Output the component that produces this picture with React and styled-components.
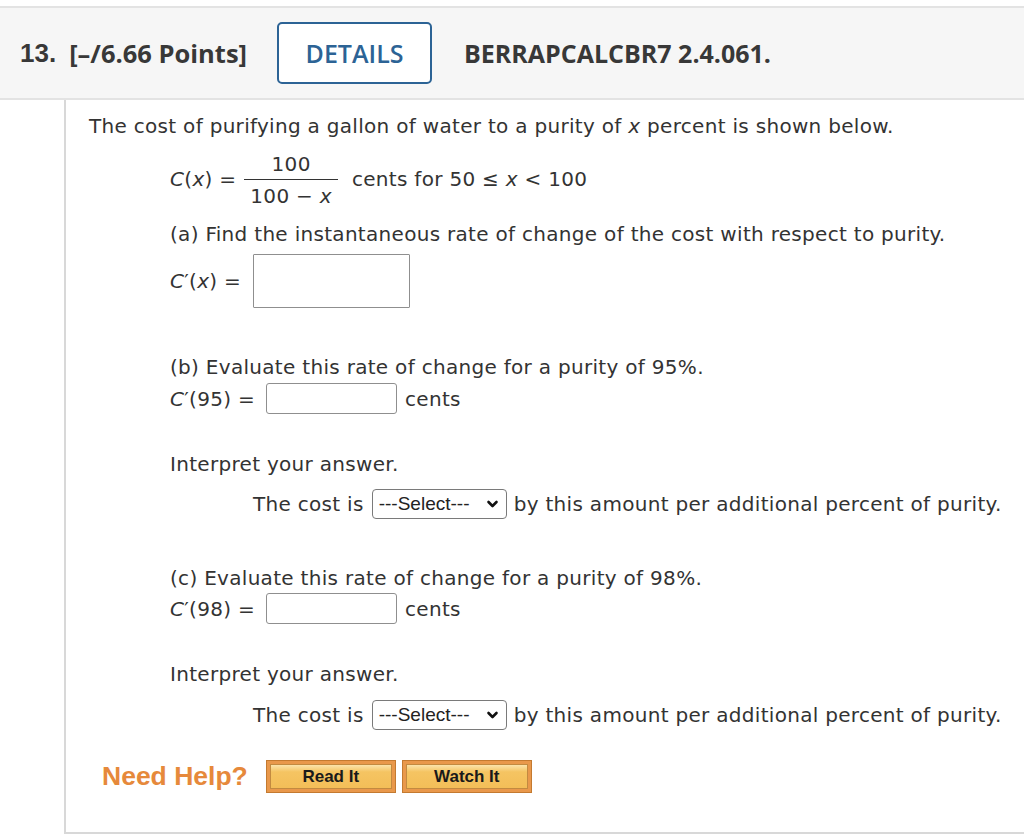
import React from "react";
import styled, { createGlobalStyle } from "styled-components";

const Global = createGlobalStyle`
  html, body { margin: 0; padding: 0; background: #fff; }
  body { font-family: "DejaVu Sans", Verdana, sans-serif; color: #333; }
`;

const Header = styled.div`
  margin-top: 6px;
  height: 94px;
  box-sizing: border-box;
  background: #f6f6f6;
  border-top: 2px solid #e3e3e3;
  border-bottom: 2px solid #e3e3e3;
  display: flex;
  align-items: center;
  padding-left: 20px;
  font-family: "Open Sans", sans-serif;
  font-weight: 700;
  color: #383838;
`;

const Num = styled.span`
  font-family: "Liberation Sans", Arial, sans-serif;
  font-size: 26px;
  font-weight: 700;
  margin-right: 13px;
`;

const Points = styled.span`
  font-size: 25.5px;
  margin-right: 30px;
`;

const DetailsBtn = styled.div`
  width: 155px;
  height: 62px;
  box-sizing: border-box;
  border: 2px solid #2c6395;
  border-radius: 5px;
  display: flex;
  align-items: center;
  justify-content: center;
  color: #2c6395;
  font-size: 25px;
  font-weight: 600;
  margin-right: 32px;
  background: #fff;
`;

const Code = styled.span`
  font-size: 25px;
`;

const Body = styled.div`
  margin-left: 64px;
  border-left: 2px solid #d8d8d8;
  border-bottom: 2px solid #d8d8d8;
  padding: 14px 0 39px 23px;
  font-size: 20px;
  letter-spacing: 0.3px;
`;

const P = styled.div`
  line-height: 24px;
  margin-top: ${(p) => p.mt || 0}px;
  padding-left: ${(p) => p.indent || 0}px;
  display: flex;
  align-items: center;
  white-space: nowrap;
`;

const I = styled.i`
  font-style: italic;
`;

const Frac = styled.span`
  display: inline-flex;
  flex-direction: column;
  align-items: stretch;
  text-align: center;
  margin: 0 14px 0 8px;
`;

const FracTop = styled.span`
  line-height: 28px;
  padding: 2px 4px 1px;
`;

const FracBottom = styled.span`
  line-height: 28px;
  border-top: 1.5px solid #333;
  padding: 2px 6px 0;
`;

const Input = styled.div`
  width: ${(p) => p.w}px;
  height: ${(p) => p.h}px;
  box-sizing: border-box;
  border: 1px solid #8f8f8f;
  border-radius: ${(p) => p.r ?? 3}px;
  background: #fff;
  margin: 0 8px 0 ${(p) => p.ml || 8}px;
`;

const Select = styled.div`
  width: 135px;
  height: 30px;
  box-sizing: border-box;
  border: 1px solid #7a7a7a;
  border-radius: 4px;
  display: flex;
  align-items: center;
  justify-content: space-between;
  padding: 0 7px 0 6px;
  margin: 0 7px 0 8px;
  font-family: "Liberation Sans", Arial, sans-serif;
  font-size: 19px;
  letter-spacing: 0;
  color: #222;
`;

const Help = styled.div`
  display: flex;
  align-items: center;
  padding-left: 13px;
  margin-top: 30px;
`;

const HelpText = styled.span`
  font-family: "Liberation Sans", Arial, sans-serif;
  font-weight: 700;
  font-size: 26.5px;
  letter-spacing: 0;
  color: #e6893b;
  margin-right: 18px;
`;

const OrangeBtn = styled.div`
  width: 130px;
  height: 33px;
  box-sizing: border-box;
  border: 1px solid #c47a30;
  background: #e9984b;
  padding: 3px;
  margin-right: 6px;
  display: flex;
`;

const OrangeInner = styled.div`
  flex: 1;
  background: linear-gradient(#fbe3ab 0, #f5c462 30%, #f3be58 100%);
  border: 1px solid #c38a40;
  display: flex;
  align-items: center;
  justify-content: center;
  font-family: "Liberation Sans", Arial, sans-serif;
  font-weight: 700;
  font-size: 17px;
  letter-spacing: 0;
  color: #1a1a1a;
`;

const Chevron = () => (
  <svg width="13" height="12" viewBox="0 0 13 12">
    <path d="M2.5 4 L6.5 8 L10.5 4" fill="none" stroke="#111" strokeWidth="2.6" strokeLinecap="round" strokeLinejoin="round" />
  </svg>
);

const Interpret = ({ mt, selMt }) => (
  <>
    <P indent={81} mt={mt}>Interpret your answer.</P>
    <P indent={164} mt={selMt}>
      The cost is
      <Select>
        <span>---Select---</span>
        <Chevron />
      </Select>
      by this amount per additional percent of purity.
    </P>
  </>
);

export default function App() {
  return (
    <>
      <Global />
      <Header>
        <Num>13.</Num>
        <Points>[–/6.66 Points]</Points>
        <DetailsBtn>DETAILS</DetailsBtn>
        <Code>BERRAPCALCBR7 2.4.061.</Code>
      </Header>
      <Body>
        <P>
          The cost of purifying a gallon of water to a purity of&nbsp;<I>x</I>&nbsp;percent is shown below.
        </P>
        <P indent={81} mt={10}>
          <I>C</I>(<I>x</I>)&nbsp;=
          <Frac>
            <FracTop>100</FracTop>
            <FracBottom>
              100 − <I>x</I>
            </FracBottom>
          </Frac>
          cents for 50 ≤&nbsp;<I>x</I>&nbsp;&lt; 100
        </P>
        <P indent={81} mt={12}>
          (a) Find the instantaneous rate of change of the cost with respect to purity.
        </P>
        <P indent={81} mt={8}>
          <I>C</I>′(<I>x</I>)&nbsp;=
          <Input w={157} h={54} r={1} ml={12} />
        </P>
        <P indent={81} mt={47}>
          (b) Evaluate this rate of change for a purity of 95%.
        </P>
        <P indent={81} mt={4}>
          <I>C</I>′(95)&nbsp;=
          <Input w={131} h={31} ml={11} />
          cents
        </P>
        <Interpret mt={38} selMt={13} />
        <P indent={81} mt={47}>
          (c) Evaluate this rate of change for a purity of 98%.
        </P>
        <P indent={81} mt={3}>
          <I>C</I>′(98)&nbsp;=
          <Input w={131} h={31} ml={11} />
          cents
        </P>
        <Interpret mt={38} selMt={14} />
        <Help>
          <HelpText>Need Help?</HelpText>
          <OrangeBtn>
            <OrangeInner>Read It</OrangeInner>
          </OrangeBtn>
          <OrangeBtn>
            <OrangeInner>Watch It</OrangeInner>
          </OrangeBtn>
        </Help>
      </Body>
    </>
  );
}
